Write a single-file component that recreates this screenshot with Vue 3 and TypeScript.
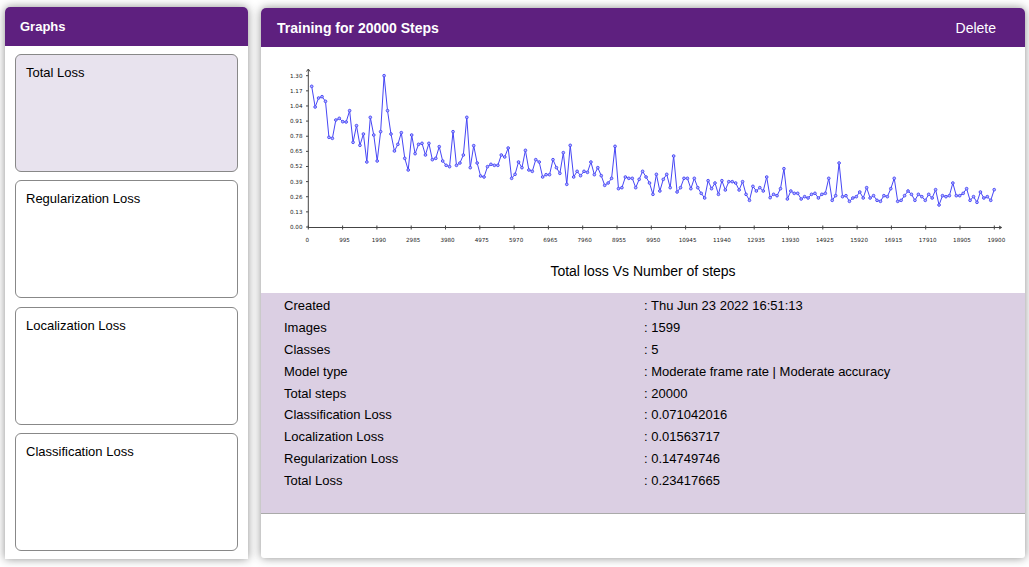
<script setup lang="ts">
const graphs: string[] = ['Total Loss', 'Regularization Loss', 'Localization Loss', 'Classification Loss']

const details: [string, string][] = [
  ['Created', 'Thu Jun 23 2022 16:51:13'],
  ['Images', '1599'],
  ['Classes', '5'],
  ['Model type', 'Moderate frame rate | Moderate accuracy'],
  ['Total steps', '20000'],
  ['Classification Loss', '0.071042016'],
  ['Localization Loss', '0.01563717'],
  ['Regularization Loss', '0.14749746'],
  ['Total Loss', '0.23417665'],
]

const raw: number[] = [
  94,156,129,125,139,247,250,195,190,200,201,167,262,212,271,237,321,187,240,318,230,62,167,237,288,268,233,310,345,240,296,268,265,300,265,314,310,275,318,331,335,230,331,324,300,187,338,272,324,363,366,335,328,331,331,300,306,279,370,358,321,338,286,
  345,349,314,321,366,359,359,314,338,355,293,388,271,366,349,362,349,352,321,359,338,362,391,384,370,274,401,398,366,370,370,398,373,349,366,384,418,358,408,373,358,398,303,411,398,370,370,401,370,398,415,429,377,401,384,418,377,405,380,380,384,405,380,418,436,394,408,398,408,366,
  428,418,422,401,341,432,408,415,415,432,425,429,418,415,429,418,415,370,436,422,324,425,422,439,429,425,411,429,398,429,422,436,439,422,425,401,370,439,436,422,408,418,436,418,425,436,418,429,404,450,422,425,422,384,422,422,415,401,436,425,442,411,429,425,436,404,
]

const points = raw.map((v, i) => ({ x: 311.7 + i * 3.447, y: 55 + v / 3 }))
const polyline = points.map((p) => `${p.x.toFixed(2)},${p.y.toFixed(2)}`).join(' ')

const yTicks = ['0.00', '0.13', '0.26', '0.39', '0.52', '0.65', '0.78', '0.91', '1.04', '1.17', '1.30'].map((label, i) => ({
  label,
  y: 227 - i * 15.13,
}))
const xTicks = Array.from({ length: 21 }, (_, i) => ({
  label: String(i * 995),
  x: 308.3 + i * 34.3,
}))
</script>

<template>
  <div class="page">
    <aside class="panel side">
      <header class="bar side-bar">Graphs</header>
      <div class="cards">
        <div v-for="(g, i) in graphs" :key="g" class="card" :class="{ active: i === 0 }">{{ g }}</div>
      </div>
    </aside>
    <main class="panel content">
      <header class="bar main-bar">
        <span>Training for 20000 Steps</span>
        <span class="delete">Delete</span>
      </header>
      <svg class="chart" viewBox="261 47 764 208" width="764" height="208">
        <g stroke="#444" stroke-width="1" fill="none">
          <path d="M308.3 70V228M308.3 227.5H1001M306.5 71.5L308.3 69L310 71.5M999 226L1001.7 227.5L999 229" />
          <path v-for="t in yTicks" :key="t.label" :d="`M306 ${t.y}H308.3`" />
          <path v-for="t in xTicks" :key="t.label" :d="`M${t.x} 225.5V229.5`" />
        </g>
        <g class="tick-text">
          <text v-for="t in yTicks" :key="t.label" x="302.5" :y="t.y + 2" text-anchor="end">{{ t.label }}</text>
          <text v-for="t in xTicks" :key="t.label" :x="t.x + (t.x === 308.3 ? -1 : 2)" y="242" text-anchor="middle">{{ t.label }}</text>
        </g>
        <polyline :points="polyline" fill="none" stroke="#4646f5" stroke-width="1" />
        <circle v-for="(p, i) in points" :key="i" :cx="p.x" :cy="p.y" r="1.35" fill="#b4b4ff" stroke="#4646f5" stroke-width="0.9" />
      </svg>
      <div class="caption">Total loss Vs Number of steps</div>
      <section class="details">
        <div v-for="[k, v] in details" :key="k" class="row">
          <span class="key">{{ k }}</span>
          <span>: {{ v }}</span>
        </div>
      </section>
    </main>
  </div>
</template>

<style>
html,
body {
  margin: 0;
  background: #fff;
}
</style>

<style scoped>
.page {
  width: 1029px;
  height: 567px;
  box-sizing: border-box;
  display: flex;
  align-items: flex-start;
  gap: 13px;
  padding: 7px 4px 8px 5px;
  font-family: "Liberation Sans", Arial, sans-serif;
  font-size: 13px;
  color: #000;
  overflow: hidden;
}
.panel {
  background: #fff;
  border-radius: 5px 5px 0 0;
  box-shadow: 0 0 10px rgba(0, 0, 0, 0.45);
  display: flex;
  flex-direction: column;
}
.side {
  width: 243px;
  height: 552px;
}
.content {
  width: 764px;
  height: 550px;
  margin-top: 1px;
  border-radius: 5px 5px 3px 3px;
}
.bar {
  background: #5e207f;
  color: #fff;
  height: 39px;
  flex: none;
  display: flex;
  align-items: center;
  justify-content: space-between;
  border-radius: 5px 5px 0 0;
  box-sizing: border-box;
}
.side-bar {
  padding: 0 15px;
  font-weight: 700;
}
.main-bar {
  padding: 0 29px 0 16px;
  font-weight: 700;
  font-size: 14px;
}
.delete {
  font-weight: 400;
}
.cards {
  display: flex;
  flex-direction: column;
  gap: 8.33px;
  padding: 8px 10px;
}
.card {
  height: 118px;
  box-sizing: border-box;
  border: 1px solid #888;
  border-radius: 6px;
  padding: 10px;
  line-height: 16px;
  background: #fff;
}
.card.active {
  background: #e8e3ee;
}
.chart {
  display: block;
  flex: none;
}
.tick-text {
  font-family: "DejaVu Sans", sans-serif;
  font-size: 5.6px;
  fill: #222;
}
.caption {
  height: 38px;
  line-height: 16px;
  font-size: 14px;
  text-align: center;
  padding-top: 8px;
  box-sizing: border-box;
}
.details {
  background: #dbcfe3;
  border-bottom: 1px solid #aaa;
  height: 221px;
  box-sizing: border-box;
  padding: 2px 23px 0;
}
.row {
  display: grid;
  grid-template-columns: 360px 1fr;
  height: 21.9px;
  line-height: 21.9px;
}
</style>
